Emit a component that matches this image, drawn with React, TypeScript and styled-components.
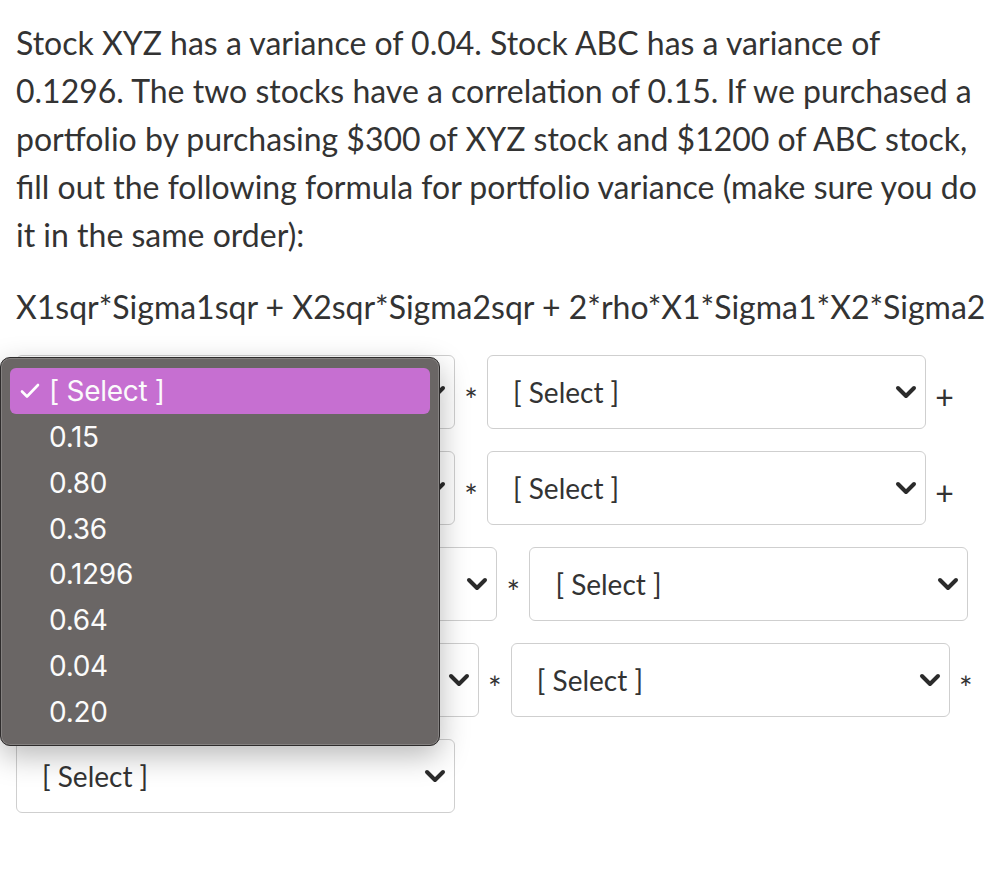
import React from "react";
import styled, { createGlobalStyle } from "styled-components";

const Global = createGlobalStyle`
  html, body { margin: 0; padding: 0; background: #ffffff; }
  body { font-family: "Lato", "Open Sans", sans-serif; color: #333333; }
`;

const Page = styled.div`
  position: relative;
  width: 994px;
  min-height: 872px;
  box-sizing: border-box;
  padding: 19px 10px 0 16px;
`;

const Para = styled.p<{ $nowrap?: boolean; $gap?: number }>`
  margin: 0 0 ${(p) => (p.$gap ?? 24)}px 0;
  font-size: 32px;
  line-height: 48px;
  white-space: ${(p) => (p.$nowrap ? "nowrap" : "normal")};
`;

const Formula = styled.div`
  font-size: 32px;
  line-height: 30px;
`;

const Box = styled.span`
  display: inline-flex;
  align-items: center;
  justify-content: space-between;
  box-sizing: border-box;
  width: 439px;
  height: 74px;
  margin: 11px 0;
  padding: 0 8px 0 25px;
  border: 1.5px solid #cfcfcf;
  border-radius: 6px;
  background: #fff;
  vertical-align: baseline;
  font-size: 28px;
  color: #333;
`;

const Op = styled.span<{ $shift: number }>`
  font-size: 32px;
  padding: 0 1px;
  vertical-align: ${(p) => p.$shift}px;
`;

const NoWrap = styled.span`
  white-space: nowrap;
`;

const Chevron = () => (
  <svg width="22" height="14" viewBox="0 0 22 14">
    <path d="M3 3 L11 11 L19 3" fill="none" stroke="#2b2b2b" strokeWidth="4" strokeLinecap="round" strokeLinejoin="round" />
  </svg>
);

const Select = () => (
  <Box>
    <span>[ Select ]</span>
    <Chevron />
  </Box>
);

const Times = () => <Op $shift={-9}>*</Op>;
const Plus = () => <Op $shift={-6}>+</Op>;

const Menu = styled.div`
  position: absolute;
  left: 0;
  top: 357px;
  width: 440px;
  height: 389px;
  box-sizing: border-box;
  padding: 10px 9px;
  background: #6a6665;
  border: 1px solid #2e2c2c;
  border-radius: 10px;
  box-shadow: inset 0 0 0 1px rgba(255,255,255,0.18), 0 10px 30px rgba(0,0,0,0.28);
  font-family: "Inter", "Noto Sans", sans-serif;
  display: flex;
  flex-direction: column;
`;

const Item = styled.div<{ $active?: boolean }>`
  position: relative;
  height: 46px;
  display: flex;
  align-items: center;
  padding-left: 39px;
  border-radius: 6px;
  background: ${(p) => (p.$active ? "#c66fd1" : "transparent")};
  color: #fbfbfb;
  font-size: 28px;
  letter-spacing: -0.3px;
`;

const Check = styled.svg`
  position: absolute;
  left: 10px;
  top: 15px;
`;

const options = ["0.15", "0.80", "0.36", "0.1296", "0.64", "0.04", "0.20"];

export default function App() {
  return (
    <>
      <Global />
      <Page>
        <Para>
          Stock XYZ has a variance of 0.04. Stock ABC has a variance of 0.1296. The two stocks have a
          correlation of 0.15. If we purchased a portfolio by purchasing $300 of XYZ stock and $1200 of ABC
          stock, fill out the following formula for portfolio variance (make sure you do it in the same order):
        </Para>
        <Para $nowrap $gap={13}>
          X1sqr*Sigma1sqr + X2sqr*Sigma2sqr + 2*rho*X1*Sigma1*X2*Sigma2
        </Para>
        <Formula>
          <Select /> <Times /> <Select /> <Plus /> <Select /> <Times /> <Select /> <Plus />{" "}
          <NoWrap>
            2<Times />
          </NoWrap>{" "}
          <Select /> <Times /> <Select /> <Times /> <Select /> <Times /> <Select /> <Times /> <Select />
        </Formula>
        <Menu>
          <Item $active>
            <Check width="20" height="16" viewBox="0 0 20 16">
              <path d="M2 8.5 L7 13.5 L18 2" fill="none" stroke="#fff" strokeWidth="2.6" strokeLinecap="round" strokeLinejoin="round" />
            </Check>
            [ Select ]
          </Item>
          {options.map((o) => (
            <Item key={o}>{o}</Item>
          ))}
        </Menu>
      </Page>
    </>
  );
}
